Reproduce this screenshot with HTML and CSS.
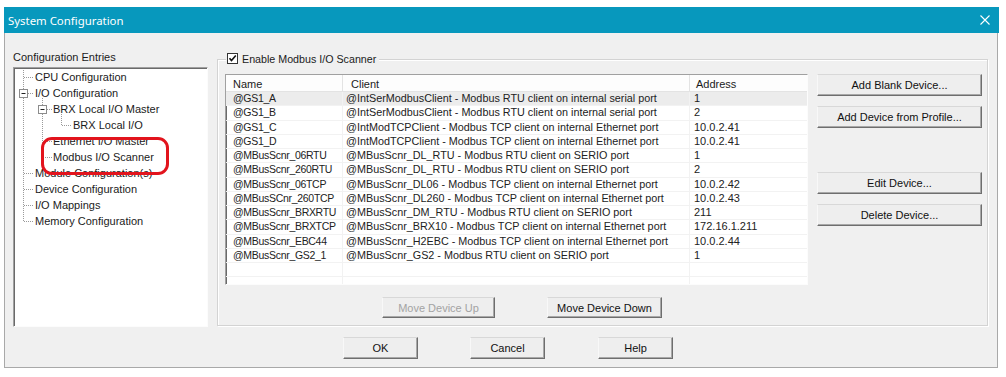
FILE: index.html
```html
<!DOCTYPE html>
<html>
<head>
<meta charset="utf-8">
<title>System Configuration</title>
<link rel="stylesheet" href="styles.css">
</head>
<body>
<div class="window">
  <div class="titlebar">
    <span class="title">System Configuration</span>
    <svg class="close" viewBox="0 0 10 10" width="10" height="10"><path d="M0.5 0.5L9.5 9.5M9.5 0.5L0.5 9.5" stroke="#fff" stroke-width="1.1" fill="none"/></svg>
  </div>
  <div class="client">
    <div class="main">
      <div class="entries">
        <div class="entries-label">Configuration Entries</div>
        <div class="tree">
          <svg class="tree-lines" width="193" height="258" viewBox="0 0 193 258">
            <g stroke="#9a9a9a" stroke-width="1" stroke-dasharray="1 1" fill="none">
              <path d="M9.5 2V154"/>
              <path d="M10 9.5H19M10 105.5H19M10 121.5H19M10 137.5H19M10 153.5H19M14 25.5H19"/>
              <path d="M28.5 30V90"/>
              <path d="M33 41.5H38M29 73.5H38M29 89.5H38"/>
              <path d="M47.5 46V58"/>
              <path d="M48 57.5H57"/>
            </g>
            <rect x="5.5" y="21.5" width="8" height="8" fill="#fff" stroke="#8c8c8c"/>
            <path d="M7.5 25.5H11.5" stroke="#222"/>
            <rect x="24.5" y="37.5" width="8" height="8" fill="#fff" stroke="#8c8c8c"/>
            <path d="M26.5 41.5H30.5" stroke="#222"/>
          </svg>
          <div class="node l0">CPU Configuration</div>
          <div class="node l0">I/O Configuration</div>
          <div class="node l1">BRX Local I/O Master</div>
          <div class="node l2">BRX Local I/O</div>
          <div class="node l1">Ethernet I/O Master</div>
          <div class="node l1">Modbus I/O Scanner</div>
          <div class="node l0">Module Configuration(s)</div>
          <div class="node l0">Device Configuration</div>
          <div class="node l0">I/O Mappings</div>
          <div class="node l0">Memory Configuration</div>
          <div class="highlight"></div>
        </div>
      </div>
      <div class="group">
        <div class="legend">
          <span class="check"><svg viewBox="0 0 9 9" width="9" height="9"><path d="M1.5 4.2L3.5 6.6L7.8 1.6" stroke="#111" stroke-width="1.6" fill="none"/></svg></span>
          <span>Enable Modbus I/O Scanner</span>
        </div>
        <div class="group-body">
          <div class="list-col">
            <div class="list">
              <div class="list-header">
                <div class="hc name">Name</div>
                <div class="hc client-col">Client</div>
                <div class="hc addr">Address</div>
              </div>
              <div class="rows">
                <div class="row sel"><div class="c name">@GS1_A</div><div class="c client-col">@IntSerModbusClient - Modbus RTU client on internal serial port</div><div class="c addr">1</div></div>
                <div class="row"><div class="c name">@GS1_B</div><div class="c client-col">@IntSerModbusClient - Modbus RTU client on internal serial port</div><div class="c addr">2</div></div>
                <div class="row"><div class="c name">@GS1_C</div><div class="c client-col">@IntModTCPClient - Modbus TCP client on internal Ethernet port</div><div class="c addr">10.0.2.41</div></div>
                <div class="row"><div class="c name">@GS1_D</div><div class="c client-col">@IntModTCPClient - Modbus TCP client on internal Ethernet port</div><div class="c addr">10.0.2.41</div></div>
                <div class="row"><div class="c name">@MBusScnr_06RTU</div><div class="c client-col">@MBusScnr_DL_RTU - Modbus RTU client on SERIO port</div><div class="c addr">1</div></div>
                <div class="row"><div class="c name">@MBusScnr_260RTU</div><div class="c client-col">@MBusScnr_DL_RTU - Modbus RTU client on SERIO port</div><div class="c addr">2</div></div>
                <div class="row"><div class="c name">@MBusScnr_06TCP</div><div class="c client-col">@MBusScnr_DL06 - Modbus TCP client on internal Ethernet port</div><div class="c addr">10.0.2.42</div></div>
                <div class="row"><div class="c name">@MBusSCnr_260TCP</div><div class="c client-col">@MBusScnr_DL260 - Modbus TCP client on internal Ethernet port</div><div class="c addr">10.0.2.43</div></div>
                <div class="row"><div class="c name">@MBusScnr_BRXRTU</div><div class="c client-col">@MBusScnr_DM_RTU - Modbus RTU client on SERIO port</div><div class="c addr">211</div></div>
                <div class="row"><div class="c name">@MBusScnr_BRXTCP</div><div class="c client-col">@MBusScnr_BRX10 - Modbus TCP client on internal Ethernet port</div><div class="c addr">172.16.1.211</div></div>
                <div class="row"><div class="c name">@MBusScnr_EBC44</div><div class="c client-col">@MBusScnr_H2EBC - Modbus TCP client on internal Ethernet port</div><div class="c addr">10.0.2.44</div></div>
                <div class="row"><div class="c name">@MBusScnr_GS2_1</div><div class="c client-col">@MBusScnr_GS2 - Modbus RTU client on SERIO port</div><div class="c addr">1</div></div>
                <div class="row"><div class="c name"></div><div class="c client-col"></div><div class="c addr"></div></div>
                <div class="row"><div class="c name"></div><div class="c client-col"></div><div class="c addr"></div></div>
              </div>
            </div>
            <div class="move-row">
              <button class="btn move-up" disabled>Move Device Up</button>
              <button class="btn move-down">Move Device Down</button>
            </div>
          </div>
          <div class="side-buttons">
            <button class="btn side">Add Blank Device...</button>
            <button class="btn side second">Add Device from Profile...</button>
            <button class="btn side third">Edit Device...</button>
            <button class="btn side second">Delete Device...</button>
          </div>
        </div>
      </div>
    </div>
    <div class="dialog-buttons">
      <button class="btn dlg">OK</button>
      <button class="btn dlg cancel">Cancel</button>
      <button class="btn dlg help">Help</button>
    </div>
  </div>
</div>
</body>
</html>
```

FILE: styles.css
```css
* { box-sizing: border-box; }
html, body { margin: 0; padding: 0; background: #fff; }
body {
  font-family: "Liberation Sans", Arial, sans-serif;
  font-size: 11px;
  color: #1b1b1b;
}
.window { margin: 7px 0 0 4px; width: 995px; }
.titlebar {
  height: 26px;
  background: #0798bd;
  color: #fff;
  display: flex;
  align-items: center;
  justify-content: space-between;
  padding: 0 9px 0 4px;
  font-family: "Noto Sans", sans-serif;
  font-size: 11.4px;
}
.close { display: block; }
.client {
  width: 994px;
  height: 335px;
  background: #f0f0f0;
  border-left: 1px solid #a9a9a9;
  border-right: 1px solid #a9a9a9;
  border-bottom: 1px solid #a9a9a9;
}
.main { display: flex; padding-left: 8px; height: 294px; }
.entries { width: 195px; padding-top: 17px; }
.entries-label { height: 14px; line-height: 14px; }
.tree {
  margin-top: 3px;
  height: 260px;
  background: #fff;
  position: relative;
  border: 1px solid;
  border-color: #a0a0a0 #fcfcfc #fcfcfc #a0a0a0;
  box-shadow: inset 1px 1px 0 #6a6a6a;
  padding-top: 1px;
  overflow: hidden;
}
.tree-lines { position: absolute; left: 0; top: 0; }
.node { position: relative; height: 16px; line-height: 16px; white-space: nowrap; }
.l0 { padding-left: 21px; }
.l1 { padding-left: 39px; }
.l2 { padding-left: 59px; }
.highlight {
  position: absolute;
  left: 27px;
  top: 69px;
  width: 128px;
  height: 38px;
  border: 3.5px solid #e2141d;
  border-radius: 11px;
}
.group {
  margin: 26px 0 0 9px;
  width: 771px;
  height: 267px;
  border: 1px solid #d3d3d3;
  box-shadow: inset 1px 1px 0 #fff, 1px 1px 0 #fff;
  position: relative;
}
.legend {
  position: absolute;
  top: -8px;
  left: 8px;
  height: 13px;
  display: flex;
  align-items: center;
  gap: 4px;
  padding: 0 3px 0 1px;
  background: #f0f0f0;
  font-size: 10.7px;
}
.check {
  width: 11px;
  height: 11px;
  border: 1px solid #333;
  background: #fff;
  display: flex;
  align-items: center;
  justify-content: center;
}
.check svg { display: block; }
.group-body { display: flex; padding: 14px 0 0 7px; }
.list-col { width: 583px; }
.list {
  height: 211px;
  background: #fff;
  border: 1px solid;
  border-color: #a0a0a0 #fcfcfc #fcfcfc #a0a0a0;
  box-shadow: inset 1px 1px 0 #6a6a6a;
  overflow: hidden;
}
.list-header, .row {
  display: grid;
  grid-template-columns: 117px 347px 1fr;
}
.list-header {
  height: 17px;
  border-bottom: 1px solid #e3e3e3;
  background: #fdfdfd;
}
.hc { line-height: 17px; padding-top: 1px; border-right: 1px solid #e3e3e3; white-space: nowrap; }
.hc.name { padding-left: 7px; }
.hc.client-col { padding-left: 8px; }
.hc.addr { padding-left: 6px; border-right: none; }
.row { height: 14.25px; border-bottom: 1px solid #f2f2f2; }
.row.sel { background: #ececec; }
.c { line-height: 13px; border-right: 1px solid #f2f2f2; white-space: nowrap; overflow: hidden; color: #222; }
.c.name { padding-left: 7px; font-size: 10.5px; letter-spacing: -0.3px; }
.c.client-col { padding-left: 3px; font-size: 10.8px; }
.c.addr { padding-left: 4px; border-right: none; }
.btn {
  font: inherit;
  color: #111;
  background: #eeeeee;
  border: 1px solid;
  border-color: #d8d8d8 #6e6e6e #6e6e6e #f8f8f8;
  box-shadow: inset -1px -1px 0 #a8a8a8;
  padding: 0;
  display: block;
}
.btn:disabled { color: #a3a3a3; }
.move-row { display: flex; margin-top: 12px; padding-left: 157px; }
.move-up { width: 113px; height: 21px; }
.move-down { width: 115px; height: 21px; margin-left: 52px; }
.side-buttons { margin-left: 9px; width: 165px; display: flex; flex-direction: column; }
.btn.side { width: 165px; height: 22px; }
.btn.side.second { margin-top: 10px; }
.btn.side.third { margin-top: 44px; }
.dialog-buttons { display: flex; padding: 10px 0 0 338px; }
.btn.dlg { width: 75px; height: 22px; }
.btn.dlg.cancel { margin-left: 52px; }
.btn.dlg.help { margin-left: 53px; }
```
